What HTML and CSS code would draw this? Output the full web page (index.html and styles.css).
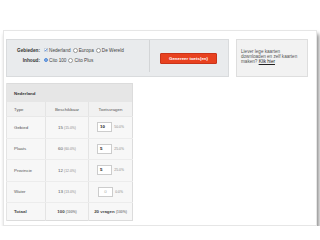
FILE: index.html
```html
<!DOCTYPE html>
<html lang="nl">
<head>
    <meta charset="UTF-8">
    <title>Toets generator</title>
    <link rel="stylesheet" href="styles.css">
</head>
<body>
    <div class="page">
        <div class="top">
            <div class="options">
                <div class="filters">
                    <div class="row">
                        <span class="label">Gebieden:</span>
                        <svg class="check" viewBox="0 0 8 8" width="4" height="4">
                            <rect x="0.5" y="0.5" width="7" height="7" rx="1" fill="#fff" stroke="#8a9ab0"/>
                            <path d="M1.8 4.2 L3.4 5.8 L6.4 1.8" fill="none" stroke="#2f6fce" stroke-width="1.6"/>
                        </svg><span class="opt">Nederland</span>
                        <span class="radio"></span><span class="opt">Europa</span>
                        <span class="radio"></span><span class="opt">De Wereld</span>
                    </div>
                    <div class="row">
                        <span class="label">Inhoud:</span>
                        <span class="radio checked"></span><span class="opt">Cito 100</span>
                        <span class="radio"></span><span class="opt">Cito Plus</span>
                    </div>
                </div>
                <div class="action">
                    <a href="#" class="btn">Genereer toets(en)</a>
                </div>
            </div>
            <div class="info">
                <span class="line">Liever lege kaarten</span>
                <span class="line">downloaden en zelf kaarten</span>
                <span class="line">maken? <a href="#">Klik hier</a></span>
            </div>
        </div>

        <table class="overview">
            <tr class="region"><th colspan="3">Nederland</th></tr>
            <tr class="heads">
                <th>Type</th>
                <th>Beschikbaar</th>
                <th>Toetsvragen</th>
            </tr>
            <tr>
                <td>Gebied</td>
                <td class="mid">15 <small>(15.0%)</small></td>
                <td class="mid"><span class="input">10</span> <small>50.0%</small></td>
            </tr>
            <tr>
                <td>Plaats</td>
                <td class="mid">60 <small>(60.0%)</small></td>
                <td class="mid"><span class="input">5</span> <small>25.0%</small></td>
            </tr>
            <tr>
                <td>Provincie</td>
                <td class="mid">12 <small>(12.0%)</small></td>
                <td class="mid"><span class="input">5</span> <small>25.0%</small></td>
            </tr>
            <tr>
                <td>Water</td>
                <td class="mid">13 <small>(13.0%)</small></td>
                <td class="mid"><span class="input empty">0</span> <small>0.0%</small></td>
            </tr>
            <tr class="total">
                <td>Totaal</td>
                <td class="mid">100 <small>(100%)</small></td>
                <td class="mid">20 vragen <small>(100%)</small></td>
            </tr>
        </table>
    </div>
</body>
</html>
```

FILE: styles.css
```css
body {
    margin: 0;
    background: #fff;
    font-family: "Liberation Sans", Arial, sans-serif;
    color: #444;
}
.page {
    margin: 30px 0 0 3px;
    width: 308px;
    height: 182px;
    padding: 8px 2px 4px 2px;
    background: #fff;
    border: 1px solid #e6e6e6;
    box-shadow: 2px 4px 4px rgba(0, 0, 0, 0.45);
}
.top {
    display: flex;
    gap: 7px;
}
.options {
    display: flex;
    width: 221px;
    height: 36px;
    background: #e9ebed;
    border: 1px solid #d9dbdd;
}
.filters {
    width: 142px;
    padding-top: 5px;
    border-right: 1px solid #d3d5d7;
    margin: 0 0 4px 0;
}
.row {
    display: flex;
    align-items: center;
    height: 10px;
    font-size: 4.7px;
}
.label {
    width: 33px;
    text-align: right;
    font-weight: bold;
    color: #333;
    margin-right: 4px;
}
.opt {
    margin: 0 2px 0 1px;
    color: #444;
}
.radio {
    width: 3px;
    height: 3px;
    border: 0.5px solid #999;
    border-radius: 50%;
    background: #fff;
}
.radio.checked {
    border: 1px solid #4a86d8;
    width: 2px;
    height: 2px;
    box-shadow: inset 0 0 0 0.6px #4a86d8;
}
.action {
    flex: 1;
    display: flex;
    align-items: center;
    justify-content: flex-start;
    padding-left: 10px;
}
.btn {
    display: inline-block;
    width: 55px;
    height: 9px;
    line-height: 9px;
    background: #e8411f;
    border: 0.5px solid #c9341a;
    color: #fff;
    font-size: 4.4px;
    font-weight: bold;
    text-align: center;
    text-decoration: none;
    border-radius: 1px;
}
.info {
    display: flex;
    flex-direction: column;
    width: 62px;
    height: 27px;
    padding: 9px 4px 0 4px;
    background: #f2f2f2;
    border: 1px solid #dedede;
    font-size: 4.6px;
    color: #555;
}
.line {
    display: block;
    height: 5px;
    line-height: 5px;
    white-space: nowrap;
}
.info a {
    color: #222;
}
.overview {
    margin-top: 6px;
    width: 127px;
    border-collapse: collapse;
    border: 1px solid #dcdcdc;
    background: #f7f7f7;
    font-size: 4.4px;
    color: #555;
}
.overview th, .overview td {
    border-left: 1px solid #e4e4e4;
    padding: 0 0 0 7px;
    text-align: left;
}
.region th {
    height: 18px;
    background: #e6e6e6;
    color: #333;
    font-weight: bold;
}
.heads th {
    height: 14px;
    background: #f1f1f1;
    font-weight: normal;
    color: #555;
    border-bottom: 1px solid #e8e8e8;
}
.heads th:nth-child(2), .heads th:nth-child(3) {
    text-align: center;
    padding: 0;
}
.overview td {
    height: 20.5px;
    border-bottom: 1px solid #ececec;
}
.overview th:first-child, .overview td:first-child {
    width: 31px;
}
.overview th:nth-child(2) {
    width: 42px;
}
.overview td.mid {
    text-align: center;
    padding: 0;
}
.overview small {
    font-size: 3.4px;
    color: #888;
}
.input {
    display: inline-block;
    width: 11px;
    height: 8px;
    line-height: 8px;
    padding-left: 2px;
    margin-right: 1px;
    background: #fff;
    border: 0.5px solid #ccc;
    text-align: left;
    font-weight: bold;
    color: #222;
    vertical-align: middle;
}
.input.empty {
    font-weight: normal;
    color: #aaa;
    text-align: center;
    padding-left: 0;
    width: 13px;
}
.total td {
    height: 17px;
    font-weight: bold;
    color: #444;
    border-bottom: none;
}
```
